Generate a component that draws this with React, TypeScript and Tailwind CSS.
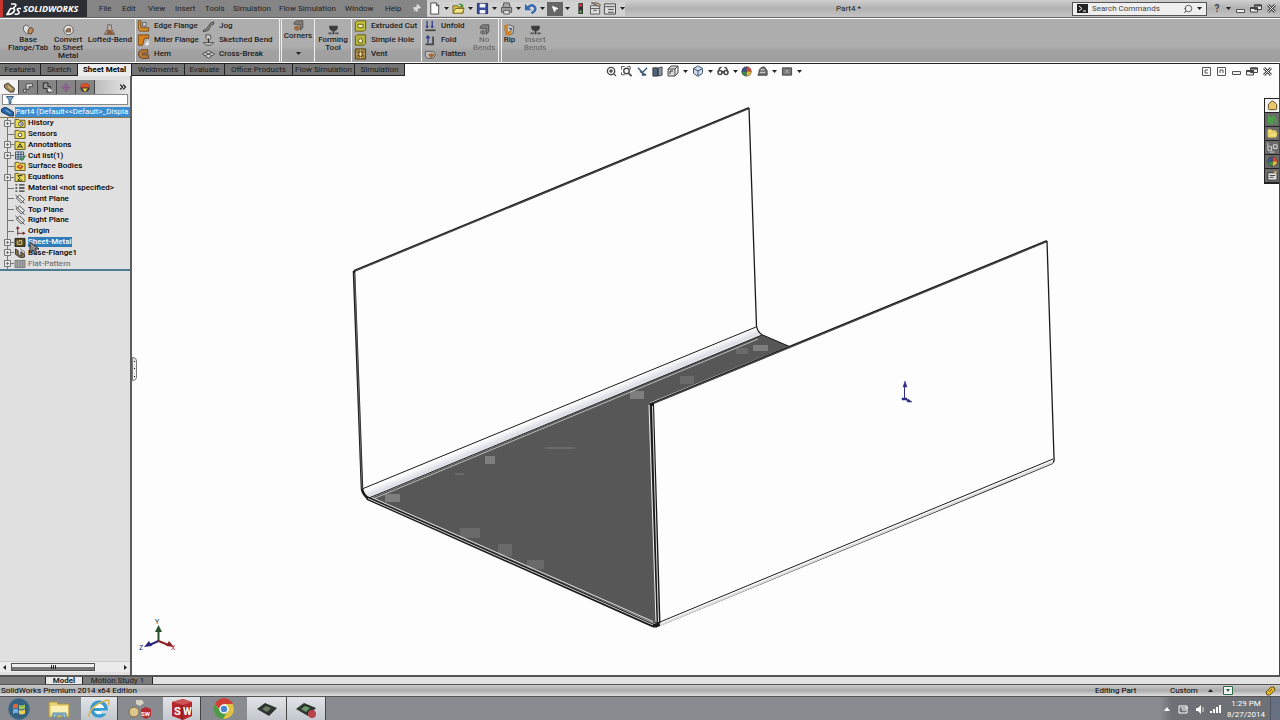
import { clsx } from 'clsx';
import {
  Box,
  ChevronsRight,
  FolderOpen,
  Glasses,
  House,
  Library,
  MousePointer2,
  Pin,
  Search,
  ZoomIn,
} from 'lucide-react';
import { ReactNode } from 'react';

export default function App() {
  return (
    <div className="flex h-screen flex-col overflow-hidden bg-[#a9a9a9] font-['Roboto','Noto_Sans',sans-serif] text-[8px] leading-[10px] text-[#1c1c1c]">
      <TitleBar />
      <Ribbon />

      <div className="relative flex min-h-0 flex-1 flex-col border-r border-[#444] bg-[#fdfdfd]">
        <CommandTabs />
        <HeadsUpToolbar />
        <DocumentControls />
        <TaskPane />

        <div className="flex min-h-0 flex-1">
          <FeatureManager />
          <main className="relative min-w-0 flex-1">
            <div className="absolute top-[281px] left-0 flex h-6 w-[5px] flex-col items-center justify-around rounded-r-sm border border-[#777] bg-[#eee]">
              <i className="h-px w-px bg-black" />
              <i className="h-px w-px bg-black" />
              <i className="h-px w-px bg-black" />
            </div>
            <Model />
          </main>
        </div>
      </div>

      <StudyTabs />
      <StatusBar />
      <Taskbar />
    </div>
  );
}

/*
 *
 * TITLE BAR
 *
 */

const menus = [
  { label: 'File', width: 'w-[23px]' },
  { label: 'Edit', width: 'w-[26px]' },
  { label: 'View', width: 'w-[27px]' },
  { label: 'Insert', width: 'w-[30px]' },
  { label: 'Tools', width: 'w-[28px]' },
  { label: 'Simulation', width: 'w-[46px]' },
  { label: 'Flow Simulation', width: 'w-[66px]' },
  { label: 'Window', width: 'w-[40px]' },
  { label: 'Help', width: 'w-[25px]' },
];

function TitleBar() {
  return (
    <header className="flex h-[18px] shrink-0 items-center border-b border-[#666] bg-linear-to-b from-[#cfcfcf] via-[#b2b2b2] to-[#c4c4c4]">
      <div className="flex h-full w-[87px] shrink-0 items-center border-l-3 border-[#c8352d] bg-[#2b2e35] pl-[3px] text-white">
        <svg viewBox="0 0 16 14" className="h-[14px] w-4 shrink-0" aria-hidden="true">
          <g fill="none" stroke="#fff" strokeWidth="1.6">
            <path d="M5 2h3.500q2 .2 1 2L7 6.500M1 12.500 4.500 6.500h2.500q2.500 .5 1 3T2 12.500z" />
            <path d="M15 6.500h-2.500q-2 .4-.7 2l1 1q1 2.200-1.600 2.800H8.500" />
          </g>
        </svg>
        <b className="ml-px font-['Open_Sans','Noto_Sans',sans-serif] text-[9px] italic">
          SOLIDWORKS
        </b>
      </div>

      <nav className="flex h-full shrink-0 items-center bg-[#858585] pl-3 text-[#222]">
        {menus.map((menu) => (
          <button key={menu.label} className={clsx('text-left whitespace-nowrap', menu.width)}>
            {menu.label}
          </button>
        ))}
        <button aria-label="Pin menu" className="w-[17px] pl-[2px]">
          <Pin className="h-[9px] w-[9px] rotate-45 fill-[#ddd] text-[#ddd]" />
        </button>
      </nav>

      <div className="flex h-[14px] shrink-0 items-center bg-[#d2d2d2]">
        <QuickButton label="New">
          <path d="M3 1h6l2.500 2.500V13H3z" fill="#fff" stroke="#444" />
          <path d="M9 1v3h3" fill="none" stroke="#444" />
        </QuickButton>
        <QuickButton label="Open">
          <path d="M1 4h5l1 1.500h5V12H1z" fill="#d7bd3a" stroke="#766a20" />
          <path d="M1 12 4 7h9l-2 5z" fill="#f5e68c" stroke="#766a20" />
          <path d="M6 3q3-3 5 0l1-1v3.500H8.500L10 4Q8 2 6 3z" fill="#3b9234" />
        </QuickButton>
        <QuickButton label="Save">
          <path d="M1.500 1.500h11v11h-11z" fill="#3b4d9e" stroke="#222b63" />
          <path d="M4 2h6v4H4zM4 8.500h6v4H4z" fill="#f3f4fa" />
        </QuickButton>
        <QuickButton label="Print">
          <path d="M4 1h6l1 5H3zM1.500 6h11v5h-11z" fill="#a5a5a5" stroke="#555" />
          <path d="M4 9h6v4H4z" fill="#ddd" stroke="#555" />
        </QuickButton>
        <QuickButton label="Undo">
          <path d="M4 6q5-5 8 0 1 4-4 6" fill="none" stroke="#3468ac" strokeWidth="2.500" />
          <path d="M1 2v7h7z" fill="#3468ac" />
        </QuickButton>
        <button
          aria-label="Select"
          className="flex h-[14px] w-4 items-center justify-center bg-[#666]"
        >
          <MousePointer2 className="h-2 w-2 fill-white text-white" />
        </button>
        <span className="flex w-[9px] justify-center">
          <Caret />
        </span>
        <svg viewBox="0 0 48 14" className="h-[13px] w-12" aria-hidden="true">
          <rect x="5" y="1" width="5" height="12" rx="1" fill="#333" />
          <circle cx="7.500" cy="3.500" r="1.500" fill="#e0403c" />
          <circle cx="7.500" cy="10.500" r="1.500" fill="#55a64b" />
          <path d="M18 4h10v9H18zM18 7h10M21 9h4" fill="#ddd" stroke="#555" />
          <path d="M19 1h6l4 2-2 2-3-2z" fill="#d8b789" stroke="#555" />
          <path d="M33 2h12v11H33zM34 5h10M37 8h6M37 11h6" fill="#ddd" stroke="#444" />
        </svg>
        <Caret />
      </div>

      <h1 className="flex-1 text-center">Part4 *</h1>

      <label className="flex h-[14px] w-[135px] shrink-0 items-center gap-1 border border-[#555] bg-[#efefef] px-1">
        <svg viewBox="0 0 11 9" className="h-[9px] w-[11px] shrink-0" aria-hidden="true">
          <path d="M0 0h11v9H0z" fill="#222" />
          <path d="m2 2 3 2.500L2 7M6 7h3" fill="none" stroke="#fff" />
        </svg>
        <input
          aria-label="Search commands"
          placeholder="Search Commands"
          className="w-0 min-w-0 flex-1 text-[8px] outline-none placeholder:text-[#444]"
        />
        <Search className="h-[10px] w-[10px] -scale-x-100 text-[#444]" />
        <Caret />
      </label>

      <div className="ml-[6px] flex h-full w-[67px] shrink-0 items-center gap-[5px] text-[#444]">
        <button aria-label="Help" className="w-2 text-[10px] font-bold">
          ?
        </button>
        <Caret />
        <WindowButtons />
      </div>
    </header>
  );
}

function QuickButton({ label, children }: { label: string; children: ReactNode }) {
  return (
    <button aria-label={label} className="flex w-6 items-center gap-[3px] pl-px">
      <svg viewBox="0 0 14 14" className="h-[13px] w-[13px]">
        {children}
      </svg>
      <Caret />
    </button>
  );
}

function Caret() {
  return (
    <svg viewBox="0 0 5 3" className="h-[3px] w-[5px] shrink-0" aria-hidden="true">
      <path d="M0 0h5L2.500 3z" fill="#222" />
    </svg>
  );
}

function WindowButtons() {
  return (
    <>
      <button aria-label="Minimize" className="pt-1">
        <svg viewBox="0 0 9 4" className="h-1 w-[9px]">
          <path d="M.5 .5h8v3h-8z" fill="#eee" stroke="#555" />
        </svg>
      </button>
      <button aria-label="Restore">
        <svg viewBox="0 0 12 9" className="h-[9px] w-3">
          <path d="M4.500 1h7v4.500h-7zM.5 3.500h7V8h-7z" fill="#eee" stroke="#444" />
          <path d="M4.500 1.500h7M.5 4h7" stroke="#444" strokeWidth="2" />
        </svg>
      </button>
      <button aria-label="Close">
        <svg viewBox="0 0 9 9" className="h-[9px] w-[9px]">
          <path d="m1 1 7 7M8 1 1 8" stroke="#444" strokeWidth="2.800" />
          <path d="m1 1 7 7M8 1 1 8" stroke="#eee" />
        </svg>
      </button>
    </>
  );
}

/*
 *
 * RIBBON
 *
 */

function Ribbon() {
  return (
    <section
      aria-label="Sheet metal commands"
      className="flex h-[45px] shrink-0 border-t border-b border-t-white border-b-white bg-linear-to-b from-[#adadad] from-65% to-[#a0a0a0] to-75% font-medium"
    >
      <div className="flex w-[136px] shrink-0 items-start justify-between border-r border-[#eee] pr-[3px] pl-2">
        <BigCommand icon="base" lines={['Base', 'Flange/Tab']} />
        <BigCommand icon="convert" lines={['Convert', 'to Sheet', 'Metal']} />
        <BigCommand icon="loft" lines={['Lofted-Bend']} />
      </div>

      <div className="flex w-[144px] shrink-0 border-r border-[#eee] pl-px">
        <SmallCommands
          className="w-[65px]"
          items={[
            ['edge', 'Edge Flange'],
            ['miter', 'Miter Flange'],
            ['hem', 'Hem'],
          ]}
        />
        <SmallCommands
          items={[
            ['jog', 'Jog'],
            ['sketched', 'Sketched Bend'],
            ['cross', 'Cross-Break'],
          ]}
        />
      </div>

      <div className="ml-px flex w-[34px] shrink-0 flex-col items-center border-r border-l border-[#eee]">
        <BigCommand icon="corner" lines={['Corners']} high />
        <span className="mt-3">
          <Caret />
        </span>
      </div>

      <div className="flex w-[37px] shrink-0 items-start justify-center border-r border-[#eee]">
        <BigCommand icon="forming" lines={['Forming', 'Tool']} />
      </div>

      <div className="w-[70px] shrink-0 border-r border-[#eee] pl-[2px]">
        <SmallCommands
          items={[
            ['cut', 'Extruded Cut'],
            ['hole', 'Simple Hole'],
            ['vent', 'Vent'],
          ]}
        />
      </div>

      <div className="flex w-[77px] shrink-0 items-start border-r border-[#eee] pl-[2px]">
        <SmallCommands
          className="w-[49px]"
          items={[
            ['unfold', 'Unfold'],
            ['fold', 'Fold'],
            ['flatten', 'Flatten'],
          ]}
        />
        <BigCommand icon="corner" lines={['No', 'Bends']} disabled />
      </div>

      <div className="ml-[2px] flex shrink-0 items-start gap-2 border-l border-[#eee] pl-px">
        <BigCommand icon="rip" lines={['Rip']} />
        <BigCommand icon="forming" lines={['Insert', 'Bends']} disabled />
      </div>
    </section>
  );
}

type BigCommandProps = {
  icon: string;
  lines: string[];
  high?: boolean;
  disabled?: boolean;
};

function BigCommand({ icon, lines, high, disabled }: BigCommandProps) {
  return (
    <button
      disabled={disabled}
      className={clsx(
        'flex flex-col items-center leading-[8px]',
        high ? 'pt-px' : 'pt-[5px]',
        disabled && 'text-[#6d6d6d] grayscale',
      )}
    >
      <CommandIcon name={icon} />
      {lines.map((line) => (
        <span key={line} className="whitespace-nowrap">
          {line}
        </span>
      ))}
    </button>
  );
}

function SmallCommands({ items, className }: { items: string[][]; className?: string }) {
  return (
    <div className={clsx('flex flex-col', className)}>
      {items.map(([icon, label]) => (
        <button key={label} className="flex h-[14px] items-center gap-1 whitespace-nowrap">
          <CommandIcon name={icon} />
          {label}
        </button>
      ))}
    </div>
  );
}

const commandIcons: Record<string, ReactNode> = {
  base: (
    <>
      <path d="m1 3 4-2 4 4v5L5 12 1 7z" fill="#ddd" stroke="#555" />
      <path d="m7 6 4-2 2 3-3 5-4-2z" fill="#b98a5c" stroke="#5a3d22" />
    </>
  ),
  convert: (
    <>
      <circle cx="7" cy="7" r="5.500" fill="#e6e6e6" stroke="#555" />
      <path d="M3 8q3-5 7-3v5H4z" fill="#8a6c54" />
    </>
  ),
  loft: (
    <>
      <path d="M5 1h4v4l4 7H1l4-7z" fill="#c9c0b7" stroke="#5c5148" />
      <path d="m5 6 4 1 3 5H3z" fill="#8c5f3a" />
    </>
  ),
  edge: (
    <>
      <path d="M1 1h3v8h9v4H3L1 11z" fill="#d8902f" stroke="#6e4614" />
      <path d="M6 3h4v4H6z" fill="#ddd" stroke="#555" />
    </>
  ),
  miter: (
    <>
      <path d="M1 1h12v4H8L6 13H1z" fill="#d98018" stroke="#6e4614" />
      <path d="m8 13 5-6v6z" fill="#f2f2f2" />
    </>
  ),
  hem: (
    <path
      d="M12 2H5Q1 3 1 7t4 5h8V8H6q-1-2 0-2h6z"
      fill="#b77a3c"
      stroke="#5f3d1a"
    />
  ),
  jog: <path d="m1 12 4-2 4-6 4-2v3l-3 1-3 6-6 2z" fill="#888" stroke="#444" />,
  sketched: (
    <>
      <path d="M4 1h5l1 4-3 3-3-3zM1 10h12l-3 3H4z" fill="#c9c9c9" stroke="#444" />
      <path d="M7 5v5" stroke="#222" />
    </>
  ),
  cross: (
    <>
      <path d="m0 7 7-4 7 4-7 5z" fill="#ccc" stroke="#444" />
      <path d="M3 5l8 4M11 5 3 9" stroke="#444" />
    </>
  ),
  corner: (
    <>
      <path d="M2 3 5 1h7v8l-3 3V5H2z" fill="#888078" stroke="#444" />
      <path d="m2 8 4-2 3 3-3 4-4-2z" fill="#9a6d42" />
    </>
  ),
  forming: (
    <>
      <path d="M2 2h10v3l-2 3H8v4H6V8H4L2 5z" fill="#3c3c3c" />
      <path d="M1 11h4M9 11h4" stroke="#555" strokeWidth="2" />
    </>
  ),
  cut: (
    <>
      <path d="M1 3 3 1h10v10l-2 2H1z" fill="#c6c13a" stroke="#56520e" />
      <path d="M4 5h6v4H4z" fill="#f5f2b0" stroke="#56520e" />
    </>
  ),
  hole: (
    <>
      <path d="M1 3 3 1h10v10l-2 2H1z" fill="#b4b53a" stroke="#56520e" />
      <circle cx="7" cy="8" r="2.500" fill="#eef0c0" stroke="#56520e" />
    </>
  ),
  vent: (
    <>
      <path d="M1 1h12v12H1z" fill="#a5813d" stroke="#4e3a12" />
      <path d="M7 2v10M2 7h10" stroke="#eadca8" />
      <circle cx="7" cy="7" r="3" fill="none" stroke="#4e3a12" />
    </>
  ),
  unfold: (
    <>
      <path d="M3 1v8M9 1v8" stroke="#2f3f8f" strokeWidth="1.500" />
      <path d="m1 7 2 3 2-3zM7 7l2 3 2-3z" fill="#2f3f8f" />
      <path d="M1 12h12" stroke="#444" strokeWidth="2" />
    </>
  ),
  fold: (
    <>
      <path d="M4 3v8" stroke="#2f3f8f" strokeWidth="1.500" />
      <path d="m1 5 3-4 3 4z" fill="#2f3f8f" />
      <path d="M1 12h9V3" fill="none" stroke="#444" strokeWidth="2" />
    </>
  ),
  flatten: (
    <>
      <path d="M1 4h9l3 4-3 4H3L1 9z" fill="#bdbdbd" stroke="#555" />
      <path d="m4 8 4-2 4 2-4 4z" fill="#a7672f" />
    </>
  ),
  rip: (
    <>
      <path d="m2 2 5-1 5 2-1 8-5 2-4-5z" fill="#c7c7c7" stroke="#555" />
      <path d="M1 1h4v8l5-2-2 6H2z" fill="#cf7f26" />
      <path d="m6 4 4 1-1 3z" fill="#39536f" />
    </>
  ),
};

function CommandIcon({ name }: { name: string }) {
  return (
    <svg viewBox="0 0 14 14" className="h-3 w-[13px] shrink-0" aria-hidden="true">
      {commandIcons[name]}
    </svg>
  );
}

/*
 *
 * COMMAND TABS
 *
 */

const commandTabs = [
  { label: 'Features', width: 'w-[41px]' },
  { label: 'Sketch', width: 'w-[37px]' },
  { label: 'Sheet Metal', width: 'w-[54px]' },
  { label: 'Weldments', width: 'w-[53px]' },
  { label: 'Evaluate', width: 'w-[40px]' },
  { label: 'Office Products', width: 'w-[68px]' },
  { label: 'Flow Simulation', width: 'w-[62px]' },
  { label: 'Simulation', width: 'w-[50px]' },
];

function CommandTabs() {
  return (
    <nav className="flex h-[13px] shrink-0 border-t border-[#222]">
      {commandTabs.map((tab) => (
        <button
          key={tab.label}
          className={clsx(
            'border-r border-[#222] leading-[10px] whitespace-nowrap',
            tab.width,
            tab.label === 'Sheet Metal'
              ? 'bg-[#ececec] font-bold text-black'
              : 'border-b bg-[#757575]',
          )}
        >
          {tab.label}
        </button>
      ))}
    </nav>
  );
}

function HeadsUpToolbar() {
  return (
    <div className="absolute top-[2px] left-[606px] flex h-3 items-center text-[#4a4a4a]">
      <button aria-label="Zoom to fit" className="w-[15px]">
        <ZoomIn className="h-[11px] w-[11px]" strokeWidth={3} />
      </button>
      <button aria-label="Zoom to area" className="w-4">
        <svg viewBox="0 0 12 12" className="h-[11px] w-[11px]" fill="none" stroke="#4a4a4a">
          <path d="M.5 4V.5H4M7 .5h3V4M.5 7v2.500H4" />
          <circle cx="6" cy="5.500" r="3" strokeWidth="1.500" />
          <path d="m8.500 8 3 3" strokeWidth="2" />
        </svg>
      </button>
      <button aria-label="Previous view" className="w-[15px]">
        <svg viewBox="0 0 12 12" className="h-[11px] w-[11px]">
          <path d="m1 2 5 5 5-5M3 6l7 4M6 7v3h4" fill="none" stroke="#3f5974" strokeWidth="1.500" />
        </svg>
      </button>
      <button aria-label="Section view" className="w-[15px]">
        <svg viewBox="0 0 12 12" className="h-[11px] w-[11px]">
          <path d="M1 2h5v9H1z" fill="#50667e" stroke="#333" />
          <path d="m7 2 4-1v9l-4 1z" fill="#8297ac" stroke="#444" />
        </svg>
      </button>
      <button aria-label="View orientation" className="flex w-[25px] items-center gap-1">
        <svg viewBox="0 0 12 12" className="h-[12px] w-[12px]">
          <path d="M1 4h7v7H1zM1 4l3-3h7L8 4M11 1v7l-3 3" fill="#ddd" stroke="#444" />
          <path d="M3 9V6h3" fill="none" stroke="#333" />
        </svg>
        <Caret />
      </button>
      <button aria-label="Display style" className="flex w-[25px] items-center gap-1">
        <Box className="h-3 w-3 fill-[#cfdcec] text-[#41566e]" strokeWidth={2} />
        <Caret />
      </button>
      <button aria-label="Hide or show items" className="flex w-6 items-center gap-1">
        <Glasses className="h-3 w-3" strokeWidth={3} />
        <Caret />
      </button>
      <button aria-label="Edit appearance" className="w-4">
        <ColorBall />
      </button>
      <button aria-label="Apply scene" className="flex w-6 items-center gap-1">
        <svg viewBox="0 0 12 12" className="h-[11px] w-[11px]">
          <path d="M2 8q0-7 6-7l3 4v5H1z" fill="#777" stroke="#333" />
          <path d="M4 4h4M3 7h6" stroke="#ddd" />
        </svg>
        <Caret />
      </button>
      <button aria-label="View settings" className="flex items-center gap-1">
        <svg viewBox="0 0 12 12" className="h-[11px] w-3">
          <path d="M1 2h10v8H1z" fill="#777" stroke="#444" />
          <path d="m4 4 4 4M8 4 4 8" stroke="#bbb" />
        </svg>
        <Caret />
      </button>
    </div>
  );
}

function ColorBall() {
  return (
    <svg viewBox="0 0 12 12" className="h-[11px] w-[11px]" aria-hidden="true">
      <circle cx="6" cy="6" r="5.500" fill="#333" />
      <path d="M6 6V1a5 5 0 0 1 5 5z" fill="#d64a35" />
      <path d="M6 6h5a5 5 0 0 1-5 5z" fill="#e0bd3a" />
      <path d="M6 6v5a5 5 0 0 1-5-5z" fill="#3c8a4a" />
      <path d="M6 6H1a5 5 0 0 1 5-5z" fill="#3a568f" />
    </svg>
  );
}

function DocumentControls() {
  return (
    <div className="absolute top-[2px] right-[7px] flex h-3 items-center gap-[5px]">
      <button aria-label="Tile left">
        <svg viewBox="0 0 9 9" className="mr-px h-[9px] w-[9px]">
          <path d="M.5 .5h8v8h-8zM3 3v3h3M3 3h3" fill="none" stroke="#555" />
        </svg>
      </button>
      <button aria-label="Tile right">
        <svg viewBox="0 0 9 9" className="mr-px h-[9px] w-[9px]">
          <path d="M.5 .5h8v8h-8zM6 3v3M3 3h3M3 6V3" fill="none" stroke="#555" />
        </svg>
      </button>
      <WindowButtons />
    </div>
  );
}

function TaskPane() {
  return (
    <aside className="absolute top-[35px] right-0 flex w-[15px] flex-col border border-r-0 border-[#222] bg-[#6b6b6b]">
      <PaneButton label="Resources" active>
        <House className="h-[11px] w-[11px] fill-[#e8c76a] text-[#5a4416]" />
      </PaneButton>
      <PaneButton label="Design library">
        <Library className="h-[11px] w-[11px] text-[#4fa049]" strokeWidth={4} />
      </PaneButton>
      <PaneButton label="File explorer">
        <FolderOpen className="h-[11px] w-[11px] fill-[#f0df7c] text-[#d5bd4f]" />
      </PaneButton>
      <PaneButton label="View palette">
        <svg viewBox="0 0 12 12" className="h-[11px] w-[11px]">
          <path d="M1 1v8h4V5H2M7 3h4v4H7zM3 11h5" fill="none" stroke="#ddd" />
        </svg>
      </PaneButton>
      <PaneButton label="Appearances">
        <ColorBall />
      </PaneButton>
      <PaneButton label="Custom properties">
        <svg viewBox="0 0 12 12" className="h-[11px] w-[11px]">
          <path d="M1 3h10v8H1z" fill="#ddd" stroke="#333" />
          <path d="M3 6h6M3 8h4" stroke="#444" />
          <path d="m8 1 3 1-3 4z" fill="#d5bd7f" />
        </svg>
      </PaneButton>
    </aside>
  );
}

type PaneButtonProps = { label: string; active?: boolean; children: ReactNode };

function PaneButton({ label, active, children }: PaneButtonProps) {
  return (
    <button
      aria-label={label}
      className={clsx(
        'flex h-[14px] items-center justify-center border-b border-[#222]',
        active && 'bg-[#f2f2f2]',
      )}
    >
      {children}
    </button>
  );
}

/*
 *
 * FEATURE TREE
 *
 */

type TreeRow = {
  label: string;
  icon: string;
  expandable?: boolean;
  selected?: boolean;
  muted?: boolean;
};

const tree: TreeRow[] = [
  { label: 'History', icon: 'history', expandable: true },
  { label: 'Sensors', icon: 'sensor' },
  { label: 'Annotations', icon: 'note', expandable: true },
  { label: 'Cut list(1)', icon: 'cutlist', expandable: true },
  { label: 'Surface Bodies', icon: 'surface' },
  { label: 'Equations', icon: 'sigma', expandable: true },
  { label: 'Material <not specified>', icon: 'material' },
  { label: 'Front Plane', icon: 'plane' },
  { label: 'Top Plane', icon: 'plane' },
  { label: 'Right Plane', icon: 'plane' },
  { label: 'Origin', icon: 'origin' },
  { label: 'Sheet-Metal', icon: 'metal', expandable: true, selected: true },
  { label: 'Base-Flange1', icon: 'flange', expandable: true },
  { label: 'Flat-Pattern', icon: 'flat', expandable: true, muted: true },
];

function FeatureManager() {
  return (
    <aside className="flex w-[132px] shrink-0 flex-col border-r-2 border-[#5c5c5c] bg-[#e0e0e0]">
      <div className="mt-[4px] flex h-[14px] shrink-0 bg-[#858585]">
        <ManagerTab label="Feature tree" active>
          <path d="m1 3 4-2 7 6-1 4H7L1 6z" fill="#a58650" stroke="#333" />
          <path d="m5 5 4 3" stroke="#eee" />
        </ManagerTab>
        <ManagerTab label="Properties">
          <path d="M4 2h7v3H7v3H4v3H1V8h3z" fill="#ddd" stroke="#444" />
        </ManagerTab>
        <ManagerTab label="Configurations">
          <path d="M2 1h5v4h3v6H6V7H2z" fill="#999" stroke="#222" />
          <circle cx="9" cy="9" r="2" fill="#ddd" />
        </ManagerTab>
        <ManagerTab label="Dimensions">
          <path d="M6 1v10M1 6h10" stroke="#8a5a8f" strokeWidth="1.500" />
          <circle cx="6" cy="6" r="3" fill="none" stroke="#8a5a8f" />
        </ManagerTab>
        <ManagerTab label="Display">
          <circle cx="6" cy="6" r="5" fill="#333" />
          <path d="M6 1a5 5 0 0 1 5 5H1a5 5 0 0 1 5-5z" fill="#d9502f" />
          <path d="M3 7h6l-3 4z" fill="#ecd03f" />
        </ManagerTab>
        <button
          aria-label="More"
          className="flex flex-1 items-center justify-end bg-linear-to-r from-[#bbb] to-[#e8e8e8] pr-[2px]"
        >
          <ChevronsRight className="h-[10px] w-[10px]" strokeWidth={3} />
        </button>
      </div>

      <label className="mx-[2px] flex h-[11px] shrink-0 items-center border border-[#888] bg-white pl-[3px]">
        <svg viewBox="0 0 9 9" className="h-2 w-2" aria-hidden="true">
          <path d="M.5 .5h8L5.500 4.500v4h-2v-4z" fill="#7da7cf" stroke="#254d7a" />
        </svg>
        <input aria-label="Filter tree" className="h-[9px] w-0 min-w-0 flex-1 outline-none" />
      </label>

      <div className="mt-[2px] grid h-[164px] shrink-0 auto-rows-fr border-b-2 border-[#4a7d91] font-medium text-black">
        <button className="flex min-h-0 items-center overflow-hidden border-b border-[#8a7440] text-left whitespace-nowrap">
          <svg viewBox="0 0 14 11" className="h-[11px] w-[15px] shrink-0" aria-hidden="true">
            <path d="m1 3 4-2 8 5v4H9L1 6z" fill="#2d67a8" stroke="#173c66" />
            <path d="m5 4 5 3" stroke="#9cc4ea" />
          </svg>
          <span className="flex-1 bg-[#3b8cd0] font-normal text-white">
            Part4 (Default&lt;&lt;Default&gt;_Displa
          </span>
        </button>
        {tree.map((row) => (
          <TreeItem key={row.label} row={row} />
        ))}
      </div>

      <div className="mt-auto mb-[3px] flex h-[11px] shrink-0 items-center justify-between border-t border-[#ccc] bg-[#ececec] px-[3px]">
        <svg viewBox="0 0 3 5" className="h-[5px] w-[3px]" aria-hidden="true">
          <path d="M3 0v5L0 2.500z" fill="#222" />
        </svg>
        <div className="mr-[29px] ml-[5px] flex h-2 flex-1 items-center justify-center gap-px border border-[#555] bg-linear-to-b from-[#eee] from-50% to-[#777] to-50%">
          <i className="h-1 w-px bg-[#222]" />
          <i className="h-1 w-px bg-[#222]" />
          <i className="h-1 w-px bg-[#222]" />
        </div>
        <svg viewBox="0 0 3 5" className="h-[5px] w-[3px]" aria-hidden="true">
          <path d="M0 0v5l3-2.500z" fill="#222" />
        </svg>
      </div>
    </aside>
  );
}

function ManagerTab({ label, active, children }: PaneButtonProps) {
  return (
    <button
      aria-label={label}
      className={clsx(
        'flex w-[19px] items-center justify-center border-r border-[#444]',
        active && 'bg-[#f4f4f4]',
      )}
    >
      <svg viewBox="0 0 12 12" className="h-[11px] w-3">
        {children}
      </svg>
    </button>
  );
}

function TreeItem({ row }: { row: TreeRow }) {
  return (
    <div className="relative flex min-h-0 items-center">
      <svg viewBox="0 0 14 11" className="h-[11px] w-[14px] shrink-0" aria-hidden="true">
        <path d="M7.500 0v11M7.500 5.500H14" stroke="#777" />
        {row.expandable && (
          <>
            <path d="M4.500 2.500h6v6h-6z" fill="#e8e8e8" stroke="#777" />
            <path d="M6 5.500h3M7.500 4v3" stroke="#777" />
          </>
        )}
      </svg>
      <svg viewBox="0 0 12 11" className="h-[10px] w-3 shrink-0" aria-hidden="true">
        {treeIcons[row.icon]}
      </svg>
      <button
        className={clsx(
          'ml-[2px] text-left whitespace-nowrap',
          row.selected && 'bg-[#2f7cb8] text-white',
          row.muted && 'text-[#777]',
        )}
      >
        {row.label}
      </button>
      {row.icon === 'flange' && (
        <svg
          viewBox="0 0 12 14"
          className="absolute top-[-6px] left-[29px] h-[14px] w-3"
          aria-hidden="true"
        >
          <path d="M1 1v10l3-2 2 4 2-1-2-4h4z" fill="#8d8d8d" stroke="#333" />
        </svg>
      )}
    </div>
  );
}

const folder = <path d="M.5 1.500h4l1 1h6v8H.5z" fill="#eadb55" stroke="#5a5320" />;

const treeIcons: Record<string, ReactNode> = {
  history: (
    <>
      {folder}
      <circle cx="7" cy="6.500" r="2.500" fill="#fff" stroke="#333" />
      <path d="M7 5v2h1" fill="none" stroke="#333" />
    </>
  ),
  sensor: (
    <>
      {folder}
      <circle cx="6" cy="6.500" r="2" fill="#fff" stroke="#444" />
    </>
  ),
  note: (
    <>
      {folder}
      <path d="m3 9 3-5 3 5M4 7.500h4" fill="none" stroke="#222" />
    </>
  ),
  cutlist: (
    <>
      <path d="M1 1h9v8H1zM1 4h9M1 6.500h9M4 1v8M7 1v8" fill="#ddd" stroke="#344d74" />
      <path d="m6 7 2 3 4-5" fill="none" stroke="#2e8a4a" strokeWidth="1.500" />
    </>
  ),
  surface: (
    <>
      {folder}
      <path d="m2 6.500 3-3 5 2-3 4z" fill="#c7521c" />
      <path d="M5 6h2" stroke="#fff" />
    </>
  ),
  sigma: (
    <>
      {folder}
      <path d="M8.500 4h-5L6 6.500 3.500 9h5" fill="none" stroke="#222" />
    </>
  ),
  material: (
    <path
      d="M1 2h2M1 5.500h2M1 9h2M5 2h6M5 5.500h6M5 9h6"
      stroke="#333"
      strokeWidth="1.500"
    />
  ),
  plane: (
    <>
      <path d="M2 4.500 5.500 1 11 6 7.500 10z" fill="#eee" stroke="#444" />
      <path d="m1 1 10 9.500" stroke="#444" />
    </>
  ),
  origin: (
    <>
      <path d="M3.500 10V2M3.500 8H10" stroke="#6b2727" />
      <path d="m1.500 3 2-3 2 3zM9 6l3 2-3 2z" fill="#6b2727" />
    </>
  ),
  metal: (
    <>
      <path d="M.5 1.500h11v9H.5z" fill="#54471e" stroke="#222" />
      <path d="M3 4v4h5V4H5v2" fill="none" stroke="#eadb8c" />
    </>
  ),
  flange: (
    <>
      <path d="m1 1 3 2v4l3 2V4l4 3v3L7 11 1 7z" fill="#8a6f45" stroke="#333" />
      <path d="m6 1 5 3v3" fill="none" stroke="#777" />
    </>
  ),
  flat: <path d="M.5 1.500h11v8H.5zM3 2v7M6 2v7M9 2v7" fill="#aaa" stroke="#777" />,
};

/*
 *
 * MODEL
 *
 */

function Model() {
  return (
    <svg
      viewBox="132 76 1147 599"
      className="block h-full w-full"
      role="img"
      aria-label="U-shaped sheet metal part"
      fill="none"
      stroke="#1b1b1b"
      strokeLinejoin="round"
    >
      <defs>
        <linearGradient
          id="bend"
          gradientUnits="userSpaceOnUse"
          x1="560"
          y1="409"
          x2="565"
          y2="421"
        >
          <stop offset="0" stopColor="#fdfdfd" />
          <stop offset="0.5" stopColor="#dcdde6" />
          <stop offset="1" stopColor="#fafafa" />
        </linearGradient>
      </defs>

      {/* floor */}
      <path
        d="M368 499 762 335l28 12-139 56 7 222z"
        fill="#575757"
        stroke="none"
      />
      <g stroke="none" fill="#888">
        <path d="M385 494h15v8h-15zM485 456h10v8h-10zM630 391h14v8h-14zM753 345h15v6h-15z" opacity=".8" />
        <path
          d="M455 473h9v2h-9zM545 447h30v2h-30zM498 544h14v12h-14zM527 560h17v9h-17zM460 528h20v10h-20zM680 376h14v8h-14zM736 348h12v6h-12z"
          opacity=".4"
        />
      </g>

      {/* left bend */}
      <path d="m362 490 394-163 6 8-394 164z" fill="url(#bend)" stroke="none" />
      <path d="m362 489 394-162M369 498l393-163" />
      <path d="m373 499 385-160" stroke="#bbb" />

      {/* left wall */}
      <path d="M354 271 749 108" strokeWidth="2.200" />
      <path d="M355 271 749 108.500" stroke="#777" strokeWidth=".6" />
      <path d="m749 108 7.500 218q1 6 6 9l28 12" strokeWidth="1.300" />
      <path d="m354 271 8 218q1 6 7 10" strokeWidth="2.600" />
      <path d="m354.500 273 7.500 216" stroke="#999" strokeWidth=".6" />

      {/* front edge */}
      <path d="m367 498 285 127q5 2 7-2" strokeWidth="3.600" />
      <path d="m368 498.500 285 126.500" stroke="#ccc" />
      <path d="m372 497.500 281 124" stroke="#ddd" />

      {/* right wall */}
      <path d="M651 404 1047 241l7 218-395 162z" fill="#fdfdfd" stroke="none" />
      <path d="m650 403 140-57" stroke="#ddd" />
      <path d="m651 404 396-163" strokeWidth="2.200" />
      <path d="m652 404 395-162.500" stroke="#777" strokeWidth=".6" />
      <path d="m1047 241 7 217q1 5-5 7L656 627" strokeWidth="1.300" />
      <path d="m1053 462-393 163" stroke="#ddd" strokeWidth="2" />
      <path d="m1053 459-393 163" />
      <path d="m652 403 6.500 220" strokeWidth="4" />
      <path d="m652.500 406 6 216" stroke="#ddd" />
      <path d="m649 405 7 217" stroke="#eee" />

      {/* origin marker */}
      <g stroke="#302c84" fill="#302c84">
        <path d="M904.500 399v-12M904 399l6 2" />
        <path d="m903 387 2-6 2 6zM908 399l4 3-5 0z" strokeWidth=".5" />
        <path d="M902 398h5v2h-5z" strokeWidth=".5" />
      </g>

      {/* axis triad */}
      <g strokeWidth="2">
        <path d="M158.500 641v-12" stroke="#24502c" />
        <path d="m158.500 641-9 4" stroke="#29267c" />
        <path d="m158.500 641 10 4" stroke="#8f2025" />
        <path d="m155 632 3.500-7 3.500 7z" fill="#24502c" stroke="none" />
        <path d="m144 647 5-6 3 5z" fill="#29267c" stroke="none" />
        <path d="m174 647-5-6-3 5z" fill="#8f2025" stroke="none" />
      </g>
      <g stroke="none" fontSize="7">
        <text x="155" y="624" fill="#333">
          Y
        </text>
        <text x="139" y="650" fill="#29267c">
          Z
        </text>
        <text x="171" y="650" fill="#b3282d">
          X
        </text>
      </g>
    </svg>
  );
}

/*
 *
 * BOTTOM BARS
 *
 */

function StudyTabs() {
  return (
    <nav className="flex h-[10px] shrink-0 border-t-2 border-b border-[#555] bg-[#e2e2e2] leading-[8px]">
      <div className="w-[46px] border-r border-[#222] bg-[#7b7b7b]" />
      <button className="w-[37px] border-r border-[#222] bg-[#e8e8e8] font-bold">Model</button>
      <button className="w-[70px] border-r border-[#222] bg-[#7b7b7b]">Motion Study 1</button>
    </nav>
  );
}

function StatusBar() {
  return (
    <footer className="flex h-3 shrink-0 items-center border-b border-[#555] bg-linear-to-b from-[#c9c9c9] via-[#acacac] to-[#dedede] pl-px text-black">
      <span>SolidWorks Premium 2014 x64 Edition</span>
      <span className="ml-auto w-[75px]">Editing Part</span>
      <button className="flex w-[53px] items-center gap-[10px]">
        Custom
        <svg viewBox="0 0 5 3" className="h-[3px] w-[5px]" aria-hidden="true">
          <path d="M0 3h5L2.500 0z" fill="#222" />
        </svg>
      </button>
      <svg viewBox="0 0 10 9" className="h-[9px] w-[10px]" aria-hidden="true">
        <path d="M.5 .5h9v8h-9z" fill="#f2f2f2" stroke="#2e6b46" />
        <path d="M3 3h4L5 6z" fill="#2e6b46" />
      </svg>
      <svg viewBox="0 0 11 10" className="mr-1 ml-8 h-[10px] w-[11px]" aria-hidden="true">
        <path d="m1 6 5-5h3l1 3-5 5H2z" fill="#e0b62b" stroke="#6b5412" />
        <path d="m4 6 3-3" stroke="#6b5412" />
      </svg>
    </footer>
  );
}

function Taskbar() {
  return (
    <div className="flex h-[23px] shrink-0 items-center bg-[#888b90]">
      <TaskButton label="Start" className="w-[38px]">
        <circle cx="12" cy="11" r="10.500" fill="#34617f" stroke="#4d7590" />
        <path d="M6 7q3-2 5-.5v4Q9 9 6 11z" fill="#e0693a" />
        <path d="M12 7q3 1 6-.5v4q-3 1.500-6 .5z" fill="#9dc455" />
        <path d="M6 12q3-2 5-.5v4Q9 14 6 16z" fill="#6fb4e0" />
        <path d="M12 12q3 1 6-.5v4q-3 1.500-6 .5z" fill="#f0cf52" />
      </TaskButton>
      <TaskButton label="File Explorer" className="w-[43px]">
        <path d="M2 4h8l1 2h11v13H2z" fill="#e9d477" stroke="#ab9540" />
        <path d="M4 8h17v8H4z" fill="#f9efb5" />
        <path d="M6 20v-5h13v5h-3v-3H9v3z" fill="#8ec0df" stroke="#5c86a0" />
      </TaskButton>
      <TaskButton label="Internet Explorer" className="w-[37px]" active>
        <circle cx="12" cy="11" r="7" fill="#fff" stroke="#399bd0" strokeWidth="3.500" />
        <path d="M6 11.500h12" stroke="#399bd0" strokeWidth="3" />
        <path d="M14 14h6" stroke="#c9d9e4" strokeWidth="3" />
        <path d="M2 19Q2 8 20 2q4 0 1 5" fill="none" stroke="#dfb545" strokeWidth="1.500" />
      </TaskButton>
      <TaskButton label="Assembly tools" className="w-[45px]">
        <circle cx="6" cy="14" r="5" fill="#dcc68a" stroke="#7a6b44" />
        <path d="M8 2h6l2 3-4 3-4-2z" fill="#d9d3c5" />
        <path d="m13 11 5-2 5 2v7l-5 3-5-3z" fill="#b52b2f" />
        <text x="13" y="18" fontSize="6" fontWeight="bold" fill="#fff">
          SW
        </text>
      </TaskButton>
      <TaskButton label="SolidWorks" className="w-[38px]" active>
        <path d="m2 4 11-3 9 3v14l-9 4-11-4z" fill="#b3262c" />
        <path d="m2 4 11-3 9 3-9 3z" fill="#cf5457" />
        <path d="M12 7v15" stroke="#6d1216" />
        <text x="4" y="17" fontSize="11" fontWeight="bold" fill="#fff">
          S
        </text>
        <text x="13" y="17" fontSize="10" fontWeight="bold" fill="#fff">
          W
        </text>
      </TaskButton>
      <TaskButton label="Chrome" className="w-[46px]">
        <circle cx="12" cy="11" r="10" fill="#dfc143" />
        <path d="M3 6a10 10 0 0 1 18 0h-9l-3 7z" fill="#cf3d34" />
        <path d="M3 6a10 10 0 0 0 8 15l4-7H9z" fill="#4c9b4b" />
        <circle cx="12" cy="11" r="4" fill="#4a86cf" stroke="#fff" strokeWidth="1.500" />
      </TaskButton>
      <TaskButton label="Capture" className="w-[40px]" active>
        <path d="m2 11 8-6 12 5-8 8z" fill="#2f3430" />
        <path d="m7 11 4-3 5 2-4 4z" fill="#6c7a66" />
      </TaskButton>
      <TaskButton label="Recorder" className="w-[39px]" active>
        <path d="m2 11 8-6 12 5-8 8z" fill="#2f3430" />
        <path d="m7 11 4-3 5 2-4 4z" fill="#6c9a66" />
        <circle cx="18" cy="16" r="4" fill="#b8434a" />
      </TaskButton>

      <div className="ml-auto flex h-full items-center bg-linear-to-r from-[#888b90] to-[#6d7074] to-10% text-white">
        <svg viewBox="0 0 70 12" className="mr-[-3px] h-3 w-[70px]" aria-label="Tray">
          <path d="m4 8 3-4 3 4z" fill="#fff" />
          <path d="M19 3h8v7h-8zM21 5h7M22 7h4" fill="none" stroke="#fff" />
          <path d="M36 5h2l3-3v9l-3-3h-2z" fill="#fff" />
          <path d="M43 4v5" stroke="#ddd" />
          <path d="M51 10V8M54 10V6M57 10V4M60 10V2" stroke="#fff" strokeWidth="2" />
        </svg>
        <div className="w-[38px] text-center leading-[11px]">
          <div>1:29 PM</div>
          <div>8/27/2014</div>
        </div>
        <button
          aria-label="Show desktop"
          className="ml-[5px] h-full w-[10px] border-l border-[#4e5560] bg-[#667080]"
        />
      </div>
    </div>
  );
}

type TaskButtonProps = {
  label: string;
  className: string;
  active?: boolean;
  children: ReactNode;
};

function TaskButton({ label, className, active, children }: TaskButtonProps) {
  return (
    <button
      aria-label={label}
      className={clsx(
        'flex h-full shrink-0 items-center justify-center border-r',
        className,
        active ? 'border-[#444] bg-linear-to-b from-[#e0e4e8] to-[#c3c8ce]' : 'border-transparent',
      )}
    >
      <svg viewBox="0 0 24 22" className="h-[22px] w-6">
        {children}
      </svg>
    </button>
  );
}
